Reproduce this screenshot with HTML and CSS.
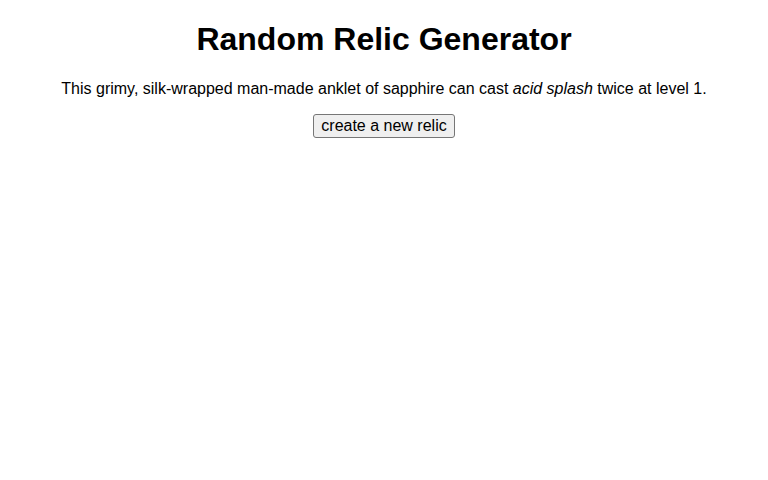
FILE: index.html
```html
<!DOCTYPE html>
<html lang="en">
<head>
<meta charset="utf-8">
<title>Random Relic Generator</title>
<link rel="stylesheet" href="styles.css">
</head>
<body class="page">
  <h1 class="title">Random Relic Generator</h1>
  <p class="relic">This grimy, silk-wrapped man-made anklet of sapphire can cast <em>acid splash</em> twice at level 1.</p>
  <button class="new-relic" type="button">create a new relic</button>
</body>
</html>
```

FILE: styles.css
```css
.page {
  margin: 0 8px;
  font-family: "Liberation Sans", Arial, sans-serif;
  text-align: center;
  color: #000;
  background: #fff;
}

.title {
  font-size: 32px;
  font-weight: bold;
  margin: 0 0 21.44px;
  padding-top: 21.44px;
}

.relic {
  font-size: 16px;
  margin: 16px 0;
}

.new-relic {
  font-family: "Liberation Sans", Arial, sans-serif;
  font-size: 16px;
  color: #000;
  background: #efefef;
  border: 1px solid #767676;
  border-radius: 3px;
  padding: 2px 7.5px;
}
```
